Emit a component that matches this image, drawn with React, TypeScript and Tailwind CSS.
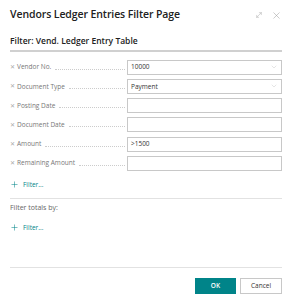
import { ChevronDown, Plus, X, MoveDiagonal } from 'lucide-react';

const fields = [
  { label: 'Vendor No.', value: '10000', select: true },
  { label: 'Document Type', value: 'Payment', select: true },
  { label: 'Posting Date', value: '' },
  { label: 'Document Date', value: '' },
  { label: 'Amount', value: '>1500' },
  { label: 'Remaining Amount', value: '' },
];

function AddFilter() {
  return (
    <div className="flex items-center gap-[4px] text-[6.5px] text-[#008489]">
      <Plus className="w-[9px] h-[9px]" strokeWidth={1.4} />
      <span>Filter...</span>
    </div>
  );
}

export default function App() {
  return (
    <div className="w-[292px] h-[300px] bg-white font-['Open_Sans',sans-serif] text-[#333] flex flex-col">
      <div className="flex items-center justify-between px-[10px] pt-[8px] h-[22px]">
        <h1 className="text-[10.5px] font-semibold tracking-[-0.1px] text-[#212121]">Vendors Ledger Entries Filter Page</h1>
        <div className="flex items-center gap-[8px] text-[#999]">
          <MoveDiagonal className="w-[8px] h-[8px]" strokeWidth={1.2} />
          <X className="w-[11px] h-[11px]" strokeWidth={1.1} />
        </div>
      </div>

      <div className="mx-[10px] mt-[13px] border-b-2 border-[#d0d0d0] pb-[2px]">
        <h2 className="text-[8.5px] font-semibold text-[#212121]">Filter: Vend. Ledger Entry Table</h2>
      </div>

      <div className="mx-[10px] mt-[8px] flex flex-col gap-[4.2px]">
        {fields.map((f) => (
          <div key={f.label} className="flex items-center h-[15px]">
            <div className="flex items-center w-[117px] text-[6.5px] text-[#777]">
              <span className="text-[5.5px] text-[#aaa] mr-[2px]">✕</span>
              <span className="whitespace-nowrap">{f.label}</span>
              <span className="flex-1 ml-[4px] mr-[2px] border-b border-dotted border-[#ccc] translate-y-[2px]" />
            </div>
            <div className="flex-1 h-[15px] border border-[#c8c8c8] flex items-center px-[3px] text-[6.5px] text-[#333]">
              <span className="flex-1">{f.value}</span>
              {f.select && <ChevronDown className="w-[8px] h-[8px] text-[#b0b0b0]" strokeWidth={1} />}
            </div>
          </div>
        ))}
      </div>

      <div className="mx-[10px] mt-[9px]">
        <AddFilter />
      </div>

      <div className="mx-[10px] mt-[9px] border-t border-[#e2e2e2]" />

      <div className="mx-[10px] mt-[4px] text-[7px] text-[#666]">Filter totals by:</div>

      <div className="mx-[10px] mt-[9px]">
        <AddFilter />
      </div>

      <div className="mx-[10px] mt-[34px] border-t border-[#e2e2e2]" />

      <div className="mx-[10px] mt-[10px] flex justify-end gap-[4px]">
        <button className="w-[41px] h-[16px] bg-[#008489] text-white text-[6.5px] font-semibold">OK</button>
        <button className="w-[42px] h-[16px] border border-[#c8c8c8] bg-white text-[6.5px] text-[#333]">Cancel</button>
      </div>
    </div>
  );
}
